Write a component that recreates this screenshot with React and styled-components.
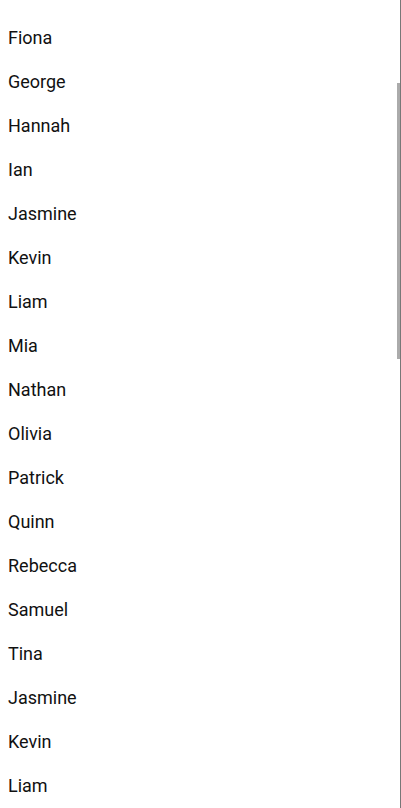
import React, { useLayoutEffect, useRef, useState } from "react";
import styled, { createGlobalStyle } from "styled-components";

const GlobalStyle = createGlobalStyle`
  html, body {
    margin: 0;
    padding: 0;
    background: #ffffff;
    overflow: hidden;
  }
  * {
    box-sizing: border-box;
  }
`;

const Frame = styled.div`
  position: relative;
  height: 100vh;
  width: 100%;
`;

const ScrollArea = styled.div`
  height: 100%;
  width: 100%;
  overflow-y: scroll;
  scrollbar-width: none;
  background: #ffffff;
  font-family: Roboto, "Liberation Sans", sans-serif;

  &::-webkit-scrollbar {
    display: none;
  }
`;

const NameList = styled.ul`
  list-style: none;
  margin: 0;
  padding: 40px 0 40px;
`;

const NameItem = styled.li`
  padding: 12px 8px;
  font-size: 18px;
  line-height: 20px;
  color: #111111;
`;

// thin overlay scrollbar drawn over the right edge of the list
const Track = styled.div`
  position: absolute;
  top: 0;
  right: 0;
  bottom: 0;
  width: 4px;
  border-right: 1px solid #777777;
  pointer-events: none;
`;

const Thumb = styled.div`
  position: absolute;
  left: 0;
  width: 3px;
  background: #ababab;
`;

const baseNames = [
  "Alice",
  "Bob",
  "Charlie",
  "David",
  "Emma",
  "Fiona",
  "George",
  "Hannah",
  "Ian",
  "Jasmine",
  "Kevin",
  "Liam",
  "Mia",
  "Nathan",
  "Olivia",
  "Patrick",
  "Quinn",
  "Rebecca",
  "Samuel",
  "Tina",
];

// the list repeats from Jasmine onward after the first pass
const names = [...baseNames];
let i = 9;
while (names.length < 52) {
  names.push(baseNames[i]);
  i = i + 1 >= baseNames.length ? 9 : i + 1;
}

const App = () => {
  const areaRef = useRef(null);
  const [thumb, setThumb] = useState({ top: 0, height: 0 });

  const updateThumb = () => {
    const el = areaRef.current;
    if (!el) return;
    const { scrollTop, scrollHeight, clientHeight } = el;
    const height = (clientHeight * clientHeight) / scrollHeight;
    const max = scrollHeight - clientHeight;
    const top = max > 0 ? (scrollTop / max) * (clientHeight - height) : 0;
    setThumb({ top, height });
  };

  useLayoutEffect(() => {
    if (areaRef.current) {
      areaRef.current.scrollTop = 244;
    }
    updateThumb();
  }, []);

  return (
    <>
      <GlobalStyle />
      <Frame>
        <ScrollArea ref={areaRef} onScroll={updateThumb}>
          <NameList>
            {names.map((name, idx) => (
              <NameItem key={idx}>{name}</NameItem>
            ))}
          </NameList>
        </ScrollArea>
        <Track>
          <Thumb style={{ top: thumb.top, height: thumb.height }} />
        </Track>
      </Frame>
    </>
  );
};

export default App;
